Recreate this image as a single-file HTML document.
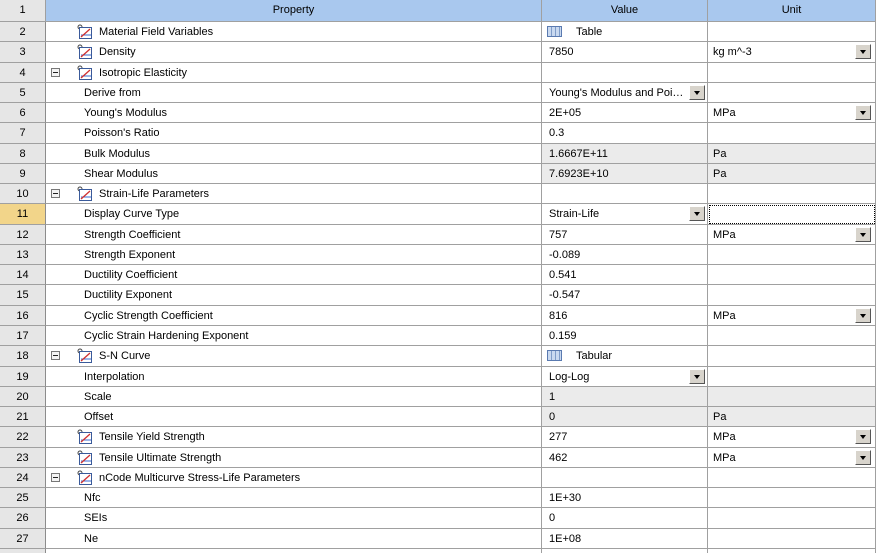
<!DOCTYPE html>
<html><head><meta charset="utf-8"><style>
*{box-sizing:border-box;margin:0;padding:0}
html,body{width:876px;height:553px;overflow:hidden}
body{background:#fff;font-family:"Liberation Sans",sans-serif;font-size:11px;color:#000}
.g{display:grid;grid-template-columns:46px 496px 166px 168px;grid-template-rows:22px repeat(27,20.27px)}
.g>div{border-right:1px solid #a0a0a0;border-bottom:1px solid #a0a0a0;position:relative;white-space:nowrap;line-height:20px;overflow:hidden}
.n{background:#e6e6e6;text-align:center;border-right-color:#8c8c8c!important}
.h{background:#a9c8ee;text-align:center;line-height:21px!important}
.hn{background:#e6e6e6;text-align:center;line-height:21px!important}
.p1{padding-left:53px}.p2{padding-left:38px}
.v{padding-left:7px}.u{padding-left:5px}
.gr{background:#ebebeb}
.sel{background:#f2d58a}
.mn{position:absolute;left:5px;top:5px;width:9px;height:9px;border:1px solid #777;background:#f4f4f4}
.mn:after{content:"";position:absolute;left:1px;top:3px;width:5px;height:1px;background:#222}
.ic{position:absolute;left:31px;top:2px}
.dd{position:absolute;top:2px;width:16px;height:15px;background:#d8d4cc;border:1px solid;border-color:#fff #555 #555 #fff}
.dd:after{content:"";position:absolute;left:4px;top:5px;border-left:3.5px solid transparent;border-right:3.5px solid transparent;border-top:4px solid #000}
.ti{position:absolute;left:5px;top:4px;width:15px;height:11px;border:1px solid #5a7ab0;background:repeating-linear-gradient(90deg,#c9d9f0 0 3px,#7f9cc8 3px 4px)}
.dot{outline:1px dotted #000;outline-offset:-2px}
</style></head><body>
<div class="g">
<div class="hn">1</div><div class="h">Property</div><div class="h">Value</div><div class="h">Unit</div>

<div class="n">2</div><div class="p1"><svg class="ic" width="16" height="16"><circle cx="3" cy="3" r="2" fill="none" stroke="#444"/><rect x="2.5" y="3.5" width="12" height="11" fill="#fff" stroke="#3a5a9a"/><path d="M4 11H14" stroke="#3a6ad0"/><path d="M4 13L13 5" stroke="#d03030" stroke-width="1.3"/></svg>Material Field Variables</div><div class="v"><span class="ti"></span><span style="padding-left:27px">Table</span></div><div></div>

<div class="n">3</div><div class="p1"><svg class="ic" width="16" height="16"><circle cx="3" cy="3" r="2" fill="none" stroke="#444"/><rect x="2.5" y="3.5" width="12" height="11" fill="#fff" stroke="#3a5a9a"/><path d="M4 11H14" stroke="#3a6ad0"/><path d="M4 13L13 5" stroke="#d03030" stroke-width="1.3"/></svg>Density</div><div class="v">7850</div><div class="u">kg m^-3<span class="dd" style="left:147px"></span></div>

<div class="n">4</div><div class="p1"><span class="mn"></span><svg class="ic" width="16" height="16"><circle cx="3" cy="3" r="2" fill="none" stroke="#444"/><rect x="2.5" y="3.5" width="12" height="11" fill="#fff" stroke="#3a5a9a"/><path d="M4 11H14" stroke="#3a6ad0"/><path d="M4 13L13 5" stroke="#d03030" stroke-width="1.3"/></svg>Isotropic Elasticity</div><div></div><div></div>

<div class="n">5</div><div class="p2">Derive from</div><div class="v">Young's Modulus and Poi…<span class="dd" style="left:147px"></span></div><div></div>
<div class="n">6</div><div class="p2">Young's Modulus</div><div class="v">2E+05</div><div class="u">MPa<span class="dd" style="left:147px"></span></div>
<div class="n">7</div><div class="p2">Poisson's Ratio</div><div class="v">0.3</div><div></div>
<div class="n">8</div><div class="p2">Bulk Modulus</div><div class="v gr">1.6667E+11</div><div class="u gr">Pa</div>
<div class="n">9</div><div class="p2">Shear Modulus</div><div class="v gr">7.6923E+10</div><div class="u gr">Pa</div>

<div class="n">10</div><div class="p1"><span class="mn"></span><svg class="ic" width="16" height="16"><circle cx="3" cy="3" r="2" fill="none" stroke="#444"/><rect x="2.5" y="3.5" width="12" height="11" fill="#fff" stroke="#3a5a9a"/><path d="M4 11H14" stroke="#3a6ad0"/><path d="M4 13L13 5" stroke="#d03030" stroke-width="1.3"/></svg>Strain-Life Parameters</div><div></div><div></div>

<div class="n sel">11</div><div class="p2">Display Curve Type</div><div class="v">Strain-Life<span class="dd" style="left:147px"></span></div><div class="dot"></div>
<div class="n">12</div><div class="p2">Strength Coefficient</div><div class="v">757</div><div class="u">MPa<span class="dd" style="left:147px"></span></div>
<div class="n">13</div><div class="p2">Strength Exponent</div><div class="v">-0.089</div><div></div>
<div class="n">14</div><div class="p2">Ductility Coefficient</div><div class="v">0.541</div><div></div>
<div class="n">15</div><div class="p2">Ductility Exponent</div><div class="v">-0.547</div><div></div>
<div class="n">16</div><div class="p2">Cyclic Strength Coefficient</div><div class="v">816</div><div class="u">MPa<span class="dd" style="left:147px"></span></div>
<div class="n">17</div><div class="p2">Cyclic Strain Hardening Exponent</div><div class="v">0.159</div><div></div>

<div class="n">18</div><div class="p1"><span class="mn"></span><svg class="ic" width="16" height="16"><circle cx="3" cy="3" r="2" fill="none" stroke="#444"/><rect x="2.5" y="3.5" width="12" height="11" fill="#fff" stroke="#3a5a9a"/><path d="M4 11H14" stroke="#3a6ad0"/><path d="M4 13L13 5" stroke="#d03030" stroke-width="1.3"/></svg>S-N Curve</div><div class="v"><span class="ti"></span><span style="padding-left:27px">Tabular</span></div><div></div>

<div class="n">19</div><div class="p2">Interpolation</div><div class="v">Log-Log<span class="dd" style="left:147px"></span></div><div></div>
<div class="n">20</div><div class="p2">Scale</div><div class="v gr">1</div><div class="gr"></div>
<div class="n">21</div><div class="p2">Offset</div><div class="v gr">0</div><div class="u gr">Pa</div>

<div class="n">22</div><div class="p1"><svg class="ic" width="16" height="16"><circle cx="3" cy="3" r="2" fill="none" stroke="#444"/><rect x="2.5" y="3.5" width="12" height="11" fill="#fff" stroke="#3a5a9a"/><path d="M4 11H14" stroke="#3a6ad0"/><path d="M4 13L13 5" stroke="#d03030" stroke-width="1.3"/></svg>Tensile Yield Strength</div><div class="v">277</div><div class="u">MPa<span class="dd" style="left:147px"></span></div>
<div class="n">23</div><div class="p1"><svg class="ic" width="16" height="16"><circle cx="3" cy="3" r="2" fill="none" stroke="#444"/><rect x="2.5" y="3.5" width="12" height="11" fill="#fff" stroke="#3a5a9a"/><path d="M4 11H14" stroke="#3a6ad0"/><path d="M4 13L13 5" stroke="#d03030" stroke-width="1.3"/></svg>Tensile Ultimate Strength</div><div class="v">462</div><div class="u">MPa<span class="dd" style="left:147px"></span></div>
<div class="n">24</div><div class="p1"><span class="mn"></span><svg class="ic" width="16" height="16"><circle cx="3" cy="3" r="2" fill="none" stroke="#444"/><rect x="2.5" y="3.5" width="12" height="11" fill="#fff" stroke="#3a5a9a"/><path d="M4 11H14" stroke="#3a6ad0"/><path d="M4 13L13 5" stroke="#d03030" stroke-width="1.3"/></svg>nCode Multicurve Stress-Life Parameters</div><div></div><div></div>

<div class="n">25</div><div class="p2">Nfc</div><div class="v">1E+30</div><div></div>
<div class="n">26</div><div class="p2">SEIs</div><div class="v">0</div><div></div>
<div class="n">27</div><div class="p2">Ne</div><div class="v">1E+08</div><div></div>
<div class="n">28</div><div class="p2"></div><div></div><div></div>
</div>
</body></html>
